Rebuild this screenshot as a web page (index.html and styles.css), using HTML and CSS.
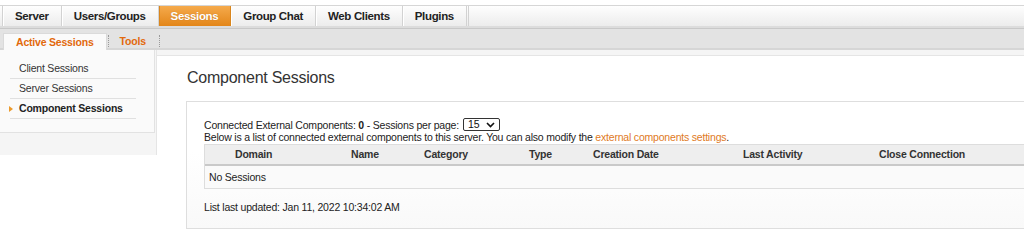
FILE: index.html
```html
<!DOCTYPE html>
<html lang="en">
<head>
<meta charset="utf-8">
<title>Component Sessions</title>
<link rel="stylesheet" href="styles.css">
</head>
<body>
<div class="page">
  <div class="topnav">
    <ul class="tabs">
      <li class="tab">Server</li>
      <li class="tab">Users/Groups</li>
      <li class="tab tab-active">Sessions</li>
      <li class="tab">Group Chat</li>
      <li class="tab">Web Clients</li>
      <li class="tab">Plugins</li>
    </ul>
  </div>
  <div class="subnav">
    <ul class="subtabs">
      <li class="subtab subtab-active">Active Sessions</li>
      <li class="subsep"></li>
      <li class="subtab">Tools</li>
      <li class="subsep"></li>
    </ul>
  </div>
  <div class="content">
    <aside class="sidebar">
      <div class="sidepanel">
        <ul class="sidelist">
          <li class="sideitem">Client Sessions</li>
          <li class="sideitem">Server Sessions</li>
          <li class="sideitem sideitem-active">Component Sessions</li>
        </ul>
      </div>
    </aside>
    <main class="main">
      <div class="panel">
        <h1 class="title">Component Sessions</h1>
        <div class="box">
          <div class="line line-first">
            <span>Connected External Components: <b>0</b> - Sessions per page:</span>
            <span class="selectwrap">
              <select class="perpage"><option>15</option><option>30</option><option>50</option><option>100</option></select>
              <svg class="chev" width="9" height="6" viewBox="0 0 9 6"><path d="M1 1 L4.5 4.6 L8 1" fill="none" stroke="#111" stroke-width="1.6"/></svg>
            </span>
          </div>
          <div class="line">Below is a list of connected external components to this server. You can also modify the <a class="link" href="#">external components settings</a>.</div>
          <table class="sessions">
            <colgroup>
              <col class="c1"><col class="c2"><col class="c3"><col class="c4"><col class="c5"><col class="c6"><col class="c7">
            </colgroup>
            <thead>
              <tr>
                <th class="first">Domain</th>
                <th>Name</th>
                <th>Category</th>
                <th>Type</th>
                <th>Creation Date</th>
                <th>Last Activity</th>
                <th>Close Connection</th>
              </tr>
            </thead>
            <tbody>
              <tr><td colspan="7">No Sessions</td></tr>
            </tbody>
          </table>
          <p class="updated">List last updated: Jan 11, 2022 10:34:02 AM</p>
        </div>
      </div>
    </main>
  </div>
</div>
</body>
</html>
```
FILE: styles.css
```css
html, body {
  margin: 0;
  padding: 0;
  background: #fff;
  overflow: hidden;
}
body {
  width: 1024px;
  height: 245px;
  font-family: "Liberation Sans", Arial, Helvetica, sans-serif;
  color: #333;
}
.page {
  width: 1024px;
  height: 245px;
  overflow: hidden;
}
ul {
  list-style: none;
  margin: 0;
  padding: 0;
}

/* top navigation */
.topnav {
  margin-top: 5px;
  border-top: 1px solid #d6d6d6;
  border-bottom: 2px solid #dcdcdc;
  height: 20px;
  background: linear-gradient(#fefefe, #ececec);
}
.tabs {
  display: flex;
  height: 20px;
  margin-left: 2px;
  border-left: 1px solid #d2d2d2;
}
.tab {
  padding: 0 12px;
  line-height: 20px;
  font-size: 11.5px;
  font-weight: bold;
  letter-spacing: -0.35px;
  color: #222;
  border-right: 1px solid #d2d2d2;
  box-shadow: inset 1px 0 0 #fff;
}
.tab:last-child {
  border-right: 3px double #d2d2d2;
}
.tab-active {
  color: #fff;
  background: linear-gradient(#f5aa4c, #e3861a);
  border-right-color: #d9861e;
  box-shadow: inset 1px 0 0 #d9861e;
  text-shadow: 0 0 1px rgba(150, 80, 0, 0.5);
}

/* sub navigation */
.subnav {
  border-top: 1px solid #c8c8c8;
  border-bottom: 2px solid #d6d6d6;
  height: 19px;
  background: #e3e3e3;
}
.subtabs {
  display: flex;
  align-items: flex-end;
  height: 19px;
  padding-left: 3px;
}
.subtab {
  padding: 0 12px;
  height: 17px;
  line-height: 17px;
  font-size: 10.5px;
  font-weight: bold;
  letter-spacing: -0.2px;
  color: #e2690c;
  margin-bottom: -2px;
  box-sizing: border-box;
}
.subtab-active {
  background: #fafafa;
  border: 1px solid #dadada;
  border-bottom: none;
  line-height: 16px;
}
.subtab:nth-child(3) {
  padding-left: 11px;
}
.subsep {
  width: 0;
  height: 12px;
  margin: 0 0 1px 1px;
  border-left: 1px dotted #9a9a9a;
  align-self: flex-end;
}

/* content */
.content {
  display: flex;
  align-items: flex-start;
}
.sidebar {
  width: 156px;
  flex: none;
  height: 105px;
  background: #f5f5f5;
  border-right: 1px solid #e5e5e5;
}
.sidepanel {
  width: 154px;
  background: #fafafa;
  border-right: 1px solid #e2e2e2;
  border-bottom: 1px solid #e2e2e2;
  padding: 9px 0 13px;
}
.sidelist {
  margin-left: 10px;
  width: 126px;
}
.sideitem {
  position: relative;
  padding-left: 9px;
  line-height: 19px;
  border-bottom: 1px solid #e0e0e0;
  font-size: 10.5px;
  letter-spacing: -0.2px;
  color: #333;
  white-space: nowrap;
}
.sideitem-active {
  font-weight: bold;
  font-size: 10.5px;
  letter-spacing: -0.2px;
  color: #222;
}
.sideitem-active::before {
  content: "";
  position: absolute;
  left: -1px;
  top: 7px;
  border-left: 4px solid #eb9a2c;
  border-top: 3px solid transparent;
  border-bottom: 3px solid transparent;
}

.main {
  flex: 1;
  min-width: 0;
  padding-top: 5px;
  background: #f5f5f5;
}
.panel {
  background: #fff;
  border-top: 1px solid #e5e5e5;
  padding-left: 30px;
  height: 300px;
}
.title {
  margin: 12px 0 0;
  font-size: 16px;
  line-height: 20px;
  font-weight: normal;
  letter-spacing: -0.25px;
  color: #333;
}
.box {
  margin: 13px 0 0 -1px;
  width: 1000px;
  border: 1px solid #dedede;
  background: linear-gradient(#fff, #fff 40%, #f9f9f9);
  padding: 16px 0 15px 17px;
  font-size: 10.5px;
  letter-spacing: -0.2px;
  color: #222;
}
.line {
  line-height: 12px;
  height: 12px;
  white-space: nowrap;
}
.line-first {
  display: flex;
  align-items: center;
  height: 13px;
}
.selectwrap {
  position: relative;
  display: inline-block;
  width: 37px;
  height: 13px;
  margin-left: 4px;
}
.perpage {
  appearance: none;
  -webkit-appearance: none;
  display: block;
  width: 37px;
  height: 13px;
  margin: 0;
  padding: 0 0 0 4px;
  border: 1px solid #333;
  border-radius: 2px;
  background: #fff;
  font-family: inherit;
  font-size: 10.5px;
  line-height: 11px;
  color: #111;
  box-sizing: border-box;
}
.chev {
  position: absolute;
  right: 5px;
  top: 4px;
  pointer-events: none;
}
.link {
  color: #e07a25;
  text-decoration: none;
}
.sessions {
  margin-top: 1px;
  border-spacing: 0;
  border-left: 1px solid #dddddd;
  table-layout: fixed;
  width: 925px;
}
.c1 { width: 146px; }
.c2 { width: 73px; }
.c3 { width: 105px; }
.c4 { width: 64px; }
.c5 { width: 150px; }
.c6 { width: 136px; }
.c7 { width: 251px; }
.sessions th {
  padding: 0;
  text-align: left;
  line-height: 19px;
  font-size: 10.5px;
  font-weight: bold;
  letter-spacing: -0.2px;
  color: #333;
  background: #eeeeee;
  border-top: 1px solid #dddddd;
  border-bottom: 2px solid #c9c9c9;
  white-space: nowrap;
}
.sessions th.first {
  padding-left: 30px;
}
.sessions td {
  padding: 0 0 0 4px;
  line-height: 22px;
  background: #fafafa;
  border-bottom: 1px solid #dddddd;
  font-size: 10.5px;
  color: #222;
}
.updated {
  margin: 12px 0 0;
  line-height: 12px;
  color: #222;
}
```
